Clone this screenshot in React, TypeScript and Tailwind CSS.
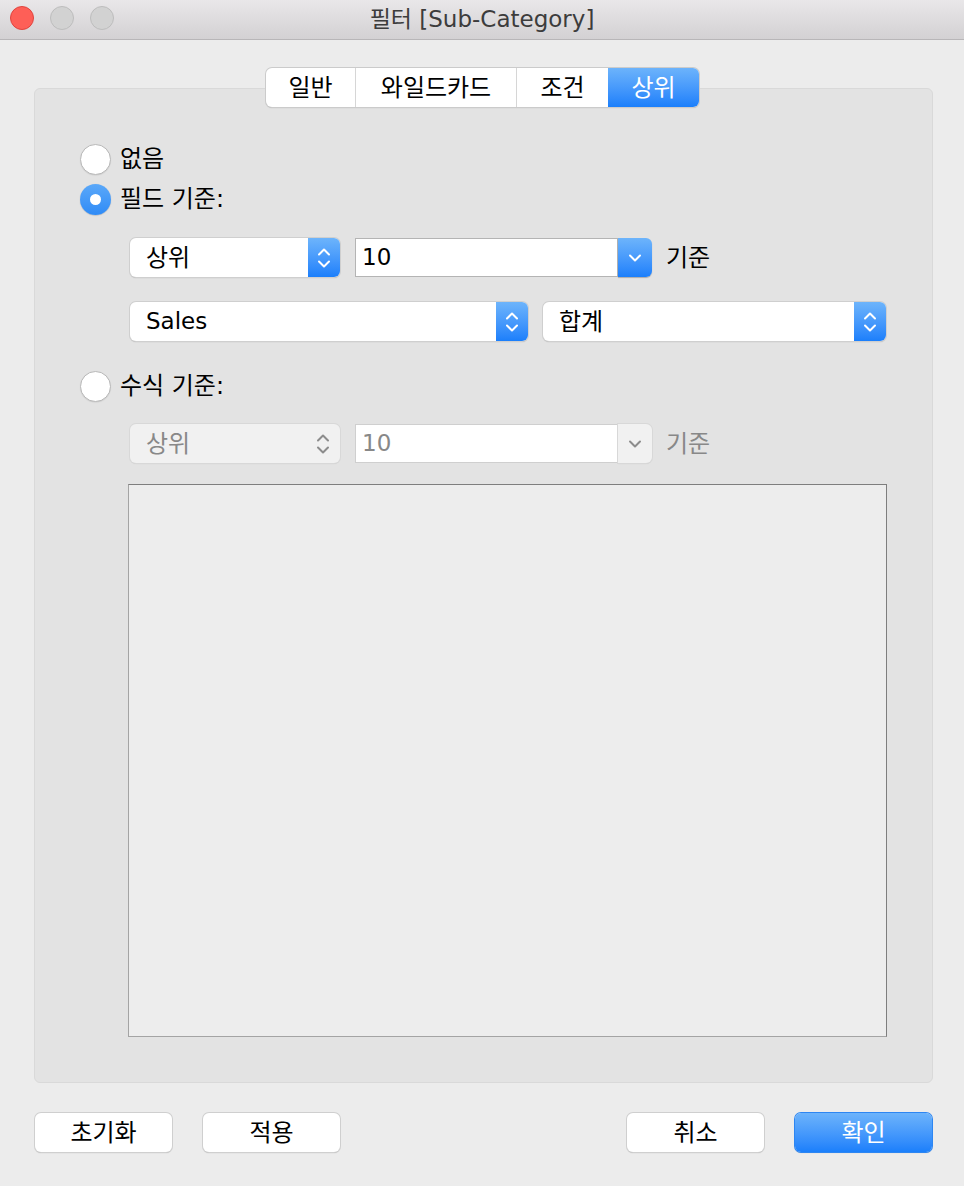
import React from 'react';

// =============================================================================
// Small drawings
// =============================================================================

function UpDown({ color = 'white' }: { color?: string }) {
  return (
    <svg width="14" height="24" viewBox="0 0 14 24" fill="none">
      <path d="M2 8.5 L7 3.5 L12 8.5" stroke={color} strokeWidth="2" strokeLinecap="round" strokeLinejoin="round" />
      <path d="M2 15.5 L7 20.5 L12 15.5" stroke={color} strokeWidth="2" strokeLinecap="round" strokeLinejoin="round" />
    </svg>
  );
}

function Down({ color = 'white' }: { color?: string }) {
  return (
    <svg width="14" height="10" viewBox="0 0 14 10" fill="none">
      <path d="M2 2.5 L7 7.5 L12 2.5" stroke={color} strokeWidth="2" strokeLinecap="round" strokeLinejoin="round" />
    </svg>
  );
}

function Radio({ checked, label }: { checked?: boolean; label: string }) {
  return (
    <div className="flex h-[32px] items-center gap-[9px]">
      {checked ? (
        <span className="flex h-[31px] w-[31px] items-center justify-center rounded-full bg-gradient-to-b from-[#5aa8f9] to-[#2f8bf6] shadow-[0_0.5px_1px_rgba(0,0,0,0.25)]">
          <span className="h-[11px] w-[11px] rounded-full bg-white" />
        </span>
      ) : (
        <span className="h-[31px] w-[31px] rounded-full border border-[#b9b9b9] bg-white shadow-[0_0.5px_1px_rgba(0,0,0,0.1)]" />
      )}
      <span className="text-[24px] leading-none text-black">{label}</span>
    </div>
  );
}

function PopUp({
  label,
  width,
  disabled,
  latin,
}: {
  label: string;
  width: string;
  disabled?: boolean;
  latin?: boolean;
}) {
  const size = latin ? 'text-[23px]' : 'text-[24px]';
  if (disabled) {
    return (
      <div className={`flex h-[39px] ${width} items-center justify-between rounded-[6px] bg-[#f1f1f1] pl-[16px] pr-[10px] shadow-[0_0_0_1px_#d8d8d8,0_1px_1px_rgba(0,0,0,0.12)]`}>
        <span className={`${size} leading-none text-[#888]`}>{label}</span>
        <UpDown color="#8c8c8c" />
      </div>
    );
  }
  return (
    <div className={`flex h-[39px] ${width} items-stretch overflow-hidden rounded-[6px] bg-white shadow-[0_0_0_1px_#cfcfcf,0_1px_1px_rgba(0,0,0,0.3)]`}>
      <span className={`flex flex-1 items-center pl-[16px] ${size} leading-none text-black`}>{label}</span>
      <span className="flex w-[32px] items-center justify-center bg-gradient-to-b from-[#6db4fb] to-[#1b7ffb]">
        <UpDown />
      </span>
    </div>
  );
}

function Combo({ disabled }: { disabled?: boolean }) {
  return (
    <div className="flex h-[39px] w-[297px] items-stretch">
      <div className={`flex flex-1 items-center border ${disabled ? 'border-[#cfcfcf]' : 'border-[#b4b4b4]'} bg-white pl-[6px]`}>
        <span className={`text-[23px] leading-none ${disabled ? 'text-[#888]' : 'text-black'}`}>10</span>
      </div>
      {disabled ? (
        <span className="flex w-[34px] items-center justify-center rounded-r-[6px] bg-[#f1f1f1] shadow-[0_0_0_1px_#d8d8d8,0_1px_1px_rgba(0,0,0,0.12)]">
          <Down color="#8c8c8c" />
        </span>
      ) : (
        <span className="flex w-[34px] items-center justify-center rounded-r-[6px] bg-gradient-to-b from-[#6db4fb] to-[#1b7ffb] shadow-[0_1px_1px_rgba(0,0,0,0.25)]">
          <Down />
        </span>
      )}
    </div>
  );
}

function Button({ label, primary }: { label: string; primary?: boolean }) {
  return (
    <div
      className={`flex h-[39px] w-[137px] items-center justify-center rounded-[6px] text-[24px] leading-none ${
        primary
          ? 'bg-gradient-to-b from-[#6cb3fb] to-[#1a7ffb] text-white shadow-[0_0_0_1px_#2d86f2,0_1px_1px_rgba(0,0,0,0.2)]'
          : 'bg-white text-black shadow-[0_0_0_1px_#cfcfcf,0_1px_1px_rgba(0,0,0,0.3)]'
      }`}
    >
      {label}
    </div>
  );
}

// =============================================================================
// Main Component
// =============================================================================

const tabs = [
  { label: '일반', w: 'w-[89px]' },
  { label: '와일드카드', w: 'w-[161px]' },
  { label: '조건', w: 'w-[92px]' },
  { label: '상위', w: 'w-[91px]' },
];

export default function App() {
  return (
    <div
      className="h-[1186px] w-[964px] overflow-hidden bg-[#ececec]"
      style={{ fontFamily: '"DejaVu Sans", "Noto Sans CJK KR", sans-serif' }}
    >
      {/* Title bar */}
      <div className="relative flex h-[40px] items-center justify-center border-b border-[#b8b6b8] bg-gradient-to-b from-[#e9e7e9] to-[#d3d1d3]">
        <div className="absolute left-[10px] top-[6px] flex gap-[16px]">
          <span className="h-[24px] w-[24px] rounded-full border border-[#e0443e] bg-[#fe5f57]" />
          <span className="h-[24px] w-[24px] rounded-full border border-[#bdbdbd] bg-[#d2d2d2]" />
          <span className="h-[24px] w-[24px] rounded-full border border-[#bdbdbd] bg-[#d2d2d2]" />
        </div>
        <span className="text-[23px] leading-none text-[#3c3c3c]">필터 [Sub-Category]</span>
      </div>

      {/* Tabs */}
      <div className="relative z-10 mt-[28px] flex justify-center pl-[1px]">
        <div className="flex h-[39px] overflow-hidden rounded-[6px] bg-white shadow-[0_0_0_1px_#cbcbcb,0_1px_1px_rgba(0,0,0,0.25)]">
          {tabs.map((t, i) => (
            <div
              key={t.label}
              className={`flex ${t.w} items-center justify-center text-[24px] leading-none ${
                i === 3
                  ? 'bg-gradient-to-b from-[#6cb3fb] to-[#1a7ffb] text-white'
                  : 'text-black'
              } ${i > 0 && i < 3 ? 'border-l border-[#d6d6d6]' : ''}`}
            >
              {t.label}
            </div>
          ))}
        </div>
      </div>

      {/* Panel */}
      <div className="-mt-[19px] ml-[34px] h-[995px] w-[899px] rounded-[6px] border border-[#d9d9d9] bg-[#e3e3e3] pl-[45px] pt-[54px]">
        <Radio label="없음" />
        <div className="mt-[8px]">
          <Radio checked label="필드 기준:" />
        </div>

        <div className="pl-[50px]">
          <div className="mt-[23px] flex items-center">
            <PopUp label="상위" width="w-[210px]" />
            <div className="ml-[15px]">
              <Combo />
            </div>
            <span className="ml-[14px] text-[24px] leading-none text-black">기준</span>
          </div>
          <div className="mt-[25px] flex items-center">
            <PopUp label="Sales" width="w-[398px]" latin />
            <div className="ml-[15px]">
              <PopUp label="합계" width="w-[343px]" />
            </div>
          </div>
        </div>

        <div className="mt-[29px]">
          <Radio label="수식 기준:" />
        </div>

        <div className="pl-[50px]">
          <div className="mt-[22px] flex items-center">
            <PopUp label="상위" width="w-[210px]" disabled />
            <div className="ml-[15px]">
              <Combo disabled />
            </div>
            <span className="ml-[14px] text-[24px] leading-none text-[#888]">기준</span>
          </div>
        </div>

        <div className="ml-[48px] mt-[21px] h-[553px] w-[759px] border border-[#a4a4a4] border-t-[#7e7e7e] border-r-[#7e7e7e] bg-[#ededed]" />
      </div>

      {/* Buttons */}
      <div className="mt-[30px] flex items-center pl-[35px] pr-[32px]">
        <Button label="초기화" />
        <div className="ml-[31px]">
          <Button label="적용" />
        </div>
        <div className="flex-1" />
        <Button label="취소" />
        <div className="ml-[31px]">
          <Button label="확인" primary />
        </div>
      </div>
    </div>
  );
}
